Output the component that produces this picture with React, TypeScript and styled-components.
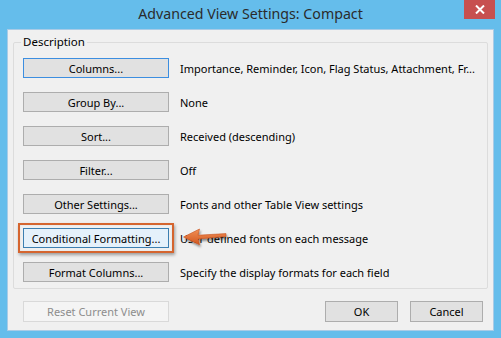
import styled, { createGlobalStyle } from 'styled-components'

const Global = createGlobalStyle`
  html, body {
    margin: 0;
    padding: 0;
    background: #65bdeb;
  }
  * {
    box-sizing: border-box;
  }
`

const Window = styled.div`
  width: 501px;
  height: 338px;
  background: #65bdeb;
  font-family: 'Noto Sans', 'Open Sans', sans-serif;
  font-size: 11px;
  color: #000;
  display: flex;
  flex-direction: column;
  overflow: hidden;
`

const TitleBar = styled.div`
  height: 29px;
  display: flex;
  align-items: flex-start;
  position: relative;
`

const Title = styled.div`
  flex: 1;
  text-align: center;
  font-size: 14.2px;
  line-height: 28px;
  color: #2b2b2b;
`

const CloseButton = styled.div`
  position: absolute;
  top: 0;
  right: 6px;
  width: 31px;
  height: 19px;
  background: #c75050;
  display: flex;
  align-items: center;
  justify-content: center;
`

const Body = styled.div`
  margin: 0 7px;
  height: 302px;
  background: #f0f0f0;
  border: 1px solid #a9cbe6;
  padding: 4px 5px 0 5px;
  display: flex;
  flex-direction: column;
`

const Group = styled.fieldset`
  margin: 0;
  padding: 8px 9px 6px 9px;
  border: 1px solid #dcdcdc;
  border-radius: 2px;
  display: flex;
  flex-direction: column;
  gap: 14px;
`

const Legend = styled.legend`
  padding: 0 2px;
  margin-left: -2px;
  line-height: 16px;
  font-size: 11.5px;
`

const Row = styled.div`
  display: flex;
  align-items: center;
  gap: 11px;
  height: 20px;
`

const Button = styled.div<{ $state?: 'focus' | 'hover' | 'disabled'; $width?: number }>`
  width: ${(p) => p.$width ?? 146}px;
  height: ${(p) => (p.$width ? 21 : 20)}px;
  flex: none;
  display: flex;
  align-items: center;
  justify-content: center;
  background: ${(p) =>
    p.$state === 'hover' ? '#e5f1fb' : p.$state === 'disabled' ? '#f4f4f4' : '#e1e1e1'};
  border: 1px solid
    ${(p) =>
      p.$state === 'focus'
        ? '#3c8ee0'
        : p.$state === 'hover'
          ? '#3c7fb1'
          : p.$state === 'disabled'
            ? '#d9d9d9'
            : '#adadad'};
  color: ${(p) => (p.$state === 'disabled' ? '#8d8d8d' : '#000')};
  white-space: nowrap;
`

const Desc = styled.div`
  white-space: nowrap;
  position: relative;
`

const Highlight = styled.div`
  position: relative;
  flex: none;
`

const HighlightFrame = styled.div`
  position: absolute;
  left: -5px;
  top: -5px;
  right: -5px;
  bottom: -5px;
  border: 2px solid #d5652f;
  box-shadow: 1px 2px 3px rgba(0, 0, 0, 0.35), inset 0 0 1px rgba(0, 0, 0, 0.2);
  pointer-events: none;
`

const Arrow = styled.svg`
  position: absolute;
  left: 3px;
  top: -4px;
  overflow: visible;
`

const Footer = styled.div`
  display: flex;
  align-items: center;
  margin-top: 12px;
  padding: 0 5px 0 10px;
`

const Spacer = styled.div`
  flex: 1;
`

const FooterButtons = styled.div`
  display: flex;
  gap: 12px;
`

const rows = [
  { label: 'Columns...', desc: 'Importance, Reminder, Icon, Flag Status, Attachment, Fr...', state: 'focus' as const },
  { label: 'Group By...', desc: 'None' },
  { label: 'Sort...', desc: 'Received (descending)' },
  { label: 'Filter...', desc: 'Off' },
  { label: 'Other Settings...', desc: 'Fonts and other Table View settings' },
  { label: 'Conditional Formatting...', desc: 'User defined fonts on each message', mark: true },
  { label: 'Format Columns...', desc: 'Specify the display formats for each field' },
]

export default function App() {
  return (
    <Window>
      <Global />
      <TitleBar>
        <Title>Advanced View Settings: Compact</Title>
        <CloseButton>
          <svg width="10" height="9" viewBox="0 0 10 9">
            <path d="M1 0.5 L9 8.5 M9 0.5 L1 8.5" stroke="#fff" strokeWidth="2" />
          </svg>
        </CloseButton>
      </TitleBar>
      <Body>
        <Group>
          <Legend>Description</Legend>
          {rows.map((r) => (
            <Row key={r.label}>
              {r.mark ? (
                <Highlight>
                  <Button $state="hover">{r.label}</Button>
                  <HighlightFrame />
                </Highlight>
              ) : (
                <Button $state={r.state}>{r.label}</Button>
              )}
              <Desc>
                {r.desc}
                {r.mark && (
                  <Arrow width="46" height="20" viewBox="0 0 46 20">
                    <defs>
                      <filter id="sh" x="-20%" y="-50%" width="140%" height="200%">
                        <feDropShadow dx="1" dy="2" stdDeviation="1.2" floodColor="#000" floodOpacity="0.45" />
                      </filter>
                      <linearGradient id="ag" x1="0" y1="0" x2="0" y2="1">
                        <stop offset="0" stopColor="#f29056" />
                        <stop offset="1" stopColor="#d0561f" />
                      </linearGradient>
                    </defs>
                    <g filter="url(#sh)">
                      <path
                        d="M43 6.6 L15 8.2 L16.5 2 L0.5 10 L16.5 17.8 L15.2 12 L43 9.4 Z"
                        fill="url(#ag)"
                        stroke="#c8531f"
                        strokeWidth="0.6"
                      />
                    </g>
                  </Arrow>
                )}
              </Desc>
            </Row>
          ))}
        </Group>
        <Footer>
          <Button $state="disabled" $width={146}>
            Reset Current View
          </Button>
          <Spacer />
          <FooterButtons>
            <Button $width={73}>OK</Button>
            <Button $width={73}>Cancel</Button>
          </FooterButtons>
        </Footer>
      </Body>
    </Window>
  )
}
